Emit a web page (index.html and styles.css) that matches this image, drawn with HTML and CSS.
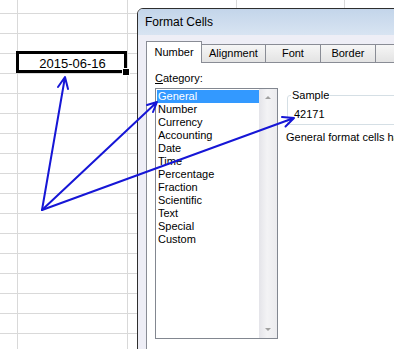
FILE: index.html
```html
<!DOCTYPE html>
<html lang="en">
<head>
    <meta charset="UTF-8">
    <meta name="viewport" content="width=device-width, initial-scale=1.0">
    <title>Format Cells</title>
    <link rel="stylesheet" href="styles.css">
</head>
<body>
    <!-- Feuille de calcul -->
    <div class="sheet">
        <div class="row"><div class="cell a"></div><div class="cell b"></div><div class="cell c"></div><div class="cell d"></div></div>
        <div class="row"><div class="cell a"></div><div class="cell b"></div><div class="cell c"></div><div class="cell d"></div></div>
        <div class="row"><div class="cell a"></div><div class="cell b"></div><div class="cell c"></div><div class="cell d"></div></div>
        <div class="row"><div class="cell a"></div><div class="cell b active">2015-06-16</div><div class="cell c"></div><div class="cell d"></div></div>
        <div class="row"><div class="cell a"></div><div class="cell b"></div><div class="cell c"></div><div class="cell d"></div></div>
        <div class="row"><div class="cell a"></div><div class="cell b"></div><div class="cell c"></div><div class="cell d"></div></div>
        <div class="row"><div class="cell a"></div><div class="cell b"></div><div class="cell c"></div><div class="cell d"></div></div>
        <div class="row"><div class="cell a"></div><div class="cell b"></div><div class="cell c"></div><div class="cell d"></div></div>
        <div class="row"><div class="cell a"></div><div class="cell b"></div><div class="cell c"></div><div class="cell d"></div></div>
        <div class="row"><div class="cell a"></div><div class="cell b"></div><div class="cell c"></div><div class="cell d"></div></div>
        <div class="row"><div class="cell a"></div><div class="cell b"></div><div class="cell c"></div><div class="cell d"></div></div>
        <div class="row"><div class="cell a"></div><div class="cell b"></div><div class="cell c"></div><div class="cell d"></div></div>
        <div class="row"><div class="cell a"></div><div class="cell b"></div><div class="cell c"></div><div class="cell d"></div></div>
        <div class="row"><div class="cell a"></div><div class="cell b"></div><div class="cell c"></div><div class="cell d"></div></div>
        <div class="row"><div class="cell a"></div><div class="cell b"></div><div class="cell c"></div><div class="cell d"></div></div>
        <div class="row"><div class="cell a"></div><div class="cell b"></div><div class="cell c"></div><div class="cell d"></div></div>
        <div class="row"><div class="cell a"></div><div class="cell b"></div><div class="cell c"></div><div class="cell d"></div></div>
        <div class="row"><div class="cell a"></div><div class="cell b"></div><div class="cell c"></div><div class="cell d"></div></div>
    </div>

    <!-- Boîte de dialogue -->
    <div class="dialog">
        <div class="titlebar">Format Cells</div>
        <div class="dialog-body">
            <ul class="tabs">
                <li class="tab active">Number</li>
                <li class="tab">Alignment</li>
                <li class="tab">Font</li>
                <li class="tab">Border</li>
                <li class="tab">Fill</li>
            </ul>
            <div class="panel">
                <div class="category">
                    <label class="category-label"><u>C</u>ategory:</label>
                    <div class="listbox">
                        <ul class="items">
                            <li class="selected">General</li>
                            <li>Number</li>
                            <li>Currency</li>
                            <li>Accounting</li>
                            <li>Date</li>
                            <li>Time</li>
                            <li>Percentage</li>
                            <li>Fraction</li>
                            <li>Scientific</li>
                            <li>Text</li>
                            <li>Special</li>
                            <li>Custom</li>
                        </ul>
                        <div class="scrollbar">
                            <span class="arrow up"></span>
                            <span class="arrow down"></span>
                        </div>
                    </div>
                </div>
                <div class="details">
                    <fieldset class="sample">
                        <legend>Sample</legend>
                        <div class="sample-value">42171</div>
                    </fieldset>
                    <p class="description">General format cells have no specific number format.</p>
                </div>
            </div>
        </div>
    </div>

    <!-- Flèches -->
    <svg class="arrows" width="394" height="349" viewBox="0 0 394 349">
        <g stroke="#1616d6" stroke-width="2" fill="none" stroke-linecap="round" stroke-linejoin="round">
            <path d="M42 210 L65 77 M58 87 L65 77 L68 89"/>
            <path d="M42 210 L157 102 M147 105 L157 102 L153 112"/>
            <path d="M42 210 L294 118 M282 117 L294 118 L285.5 126.5"/>
        </g>
    </svg>
</body>
</html>
```

FILE: styles.css
```css
/* Général */
* {
    margin: 0;
    padding: 0;
    box-sizing: border-box;
}

body {
    position: relative;
    width: 394px;
    height: 349px;
    overflow: hidden;
    background-color: #fff;
    font-family: "Liberation Sans", Arial, sans-serif;
    font-size: 11px;
    color: #000;
}

/* Feuille */
.row {
    display: flex;
    height: 20px;
}

.row:first-child {
    height: 14px;
}

.cell {
    flex: none;
    border-right: 1px solid #d9d9d9;
    border-bottom: 1px solid #d9d9d9;
}

.a { width: 18px; }
.b { width: 110px; }
.c { width: 109px; }
.d { width: 108px; }

.cell.active {
    position: relative;
    font-size: 13px;
    line-height: 19px;
    text-align: center;
}

.cell.active::before {
    content: "";
    position: absolute;
    top: -3px;
    left: -2px;
    right: 0;
    bottom: 0;
    border: 3px solid #000;
}

.cell.active::after {
    content: "";
    position: absolute;
    right: -2px;
    bottom: -2px;
    width: 6px;
    height: 6px;
    background-color: #000;
    outline: 1px solid #fff;
}

/* Dialogue */
.dialog {
    position: absolute;
    left: 137px;
    top: 8px;
    width: 290px;
    height: 360px;
    border: 1px solid #2e2e2e;
    border-radius: 6px 6px 0 0;
    background-color: #eeeef6;
    overflow: hidden;
}

.titlebar {
    height: 26px;
    padding-left: 7px;
    line-height: 26px;
    font-size: 12px;
    background: linear-gradient(#c3d5ea, #d8e4f2);
}

.dialog-body {
    padding: 6px 0 0 8px;
}

.tabs {
    list-style: none;
    display: flex;
    align-items: flex-end;
    height: 21px;
}

.tab {
    flex: none;
    height: 18px;
    min-width: 56px;
    padding: 0 7px;
    margin-right: -1px;
    border: 1px solid #898c95;
    border-bottom: none;
    background: linear-gradient(#f6f6f6, #e3e3e3);
    text-align: center;
    line-height: 17px;
    white-space: nowrap;
}

.tab.active {
    position: relative;
    z-index: 1;
    height: 22px;
    margin-bottom: -1px;
    background: #fff;
    line-height: 21px;
}

.panel {
    display: flex;
    gap: 9px;
    height: 300px;
    padding: 9px 0 0 8px;
    background-color: #fff;
    border-top: 1px solid #898c95;
    border-left: 1px solid #898c95;
}

.category-label {
    display: block;
    line-height: 13px;
    margin-bottom: 3px;
}

.listbox {
    display: flex;
    width: 123px;
    height: 251px;
    padding: 1px 0 0 1px;
    border: 1px solid #828790;
}

.items {
    list-style: none;
    flex: 1;
}

.items li {
    line-height: 13px;
    padding-left: 1px;
}

.items li.selected {
    background-color: #3399ff;
    color: #fff;
}

.scrollbar {
    width: 18px;
    margin-top: -1px;
    display: flex;
    flex-direction: column;
    justify-content: space-between;
    background: linear-gradient(to right, #e4e4e9, #f3f3f5 45%, #ebebee);
}

.arrow {
    display: flex;
    justify-content: center;
    align-items: center;
    height: 17px;
}

.arrow::before {
    content: "";
    border-left: 3px solid transparent;
    border-right: 3px solid transparent;
}

.arrow.up::before {
    border-bottom: 3px solid #a0a0a0;
}

.arrow.down::before {
    border-top: 3px solid #a0a0a0;
}

.details {
    flex: none;
    width: 200px;
    margin-top: 17px;
    white-space: nowrap;
}

.sample {
    border: 1px solid #d5dfe5;
    border-radius: 3px;
    padding: 0 3px 3px;
}

.sample legend {
    padding: 0 1px;
    line-height: 13px;
}

.sample-value {
    padding: 6px 0 0 3px;
    line-height: 13px;
}

.description {
    margin: 6px 0 0 -1px;
    line-height: 13px;
}

/* Flèches */
.arrows {
    position: absolute;
    top: 0;
    left: 0;
    z-index: 2;
    pointer-events: none;
}
```
